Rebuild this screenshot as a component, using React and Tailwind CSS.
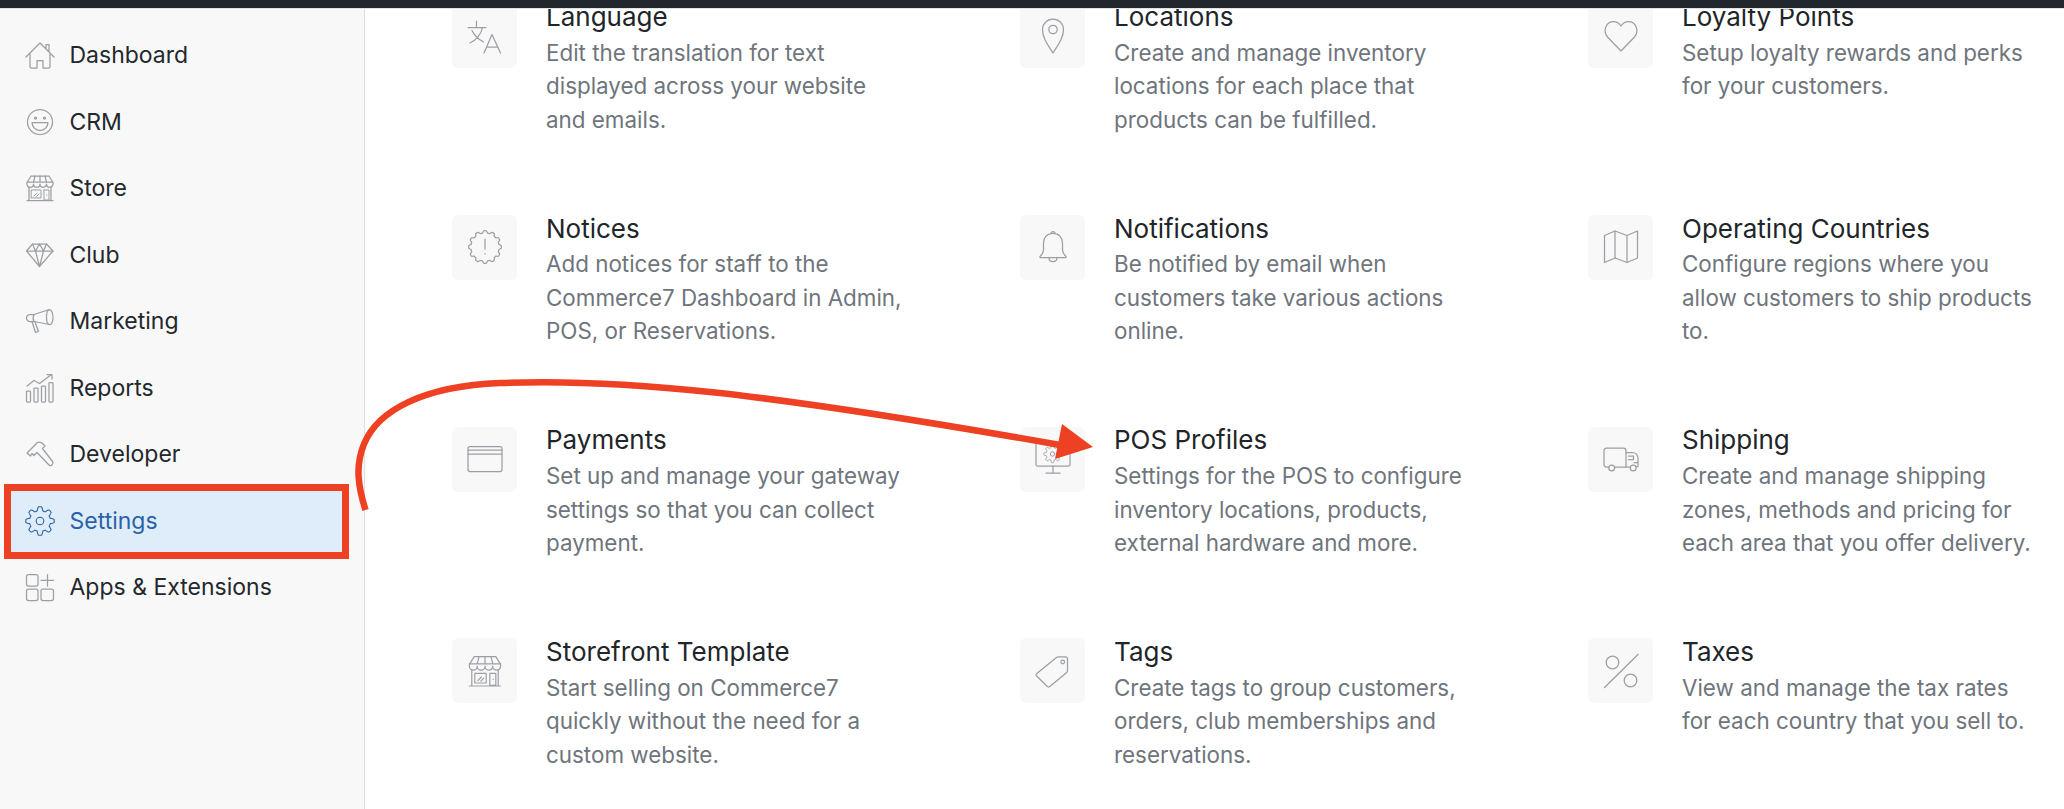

const S = ({ size = 30, box = 30, sw = 1.25, children }) => (
  <svg width={size} height={size} viewBox={`0 0 ${box} ${box}`} fill="none" stroke="currentColor" strokeWidth={sw} strokeLinecap="round" strokeLinejoin="round" className="shrink-0">
    {children}
  </svg>
);

const wavy = (cx, cy, r, amp, lobes) => {
  let d = "";
  for (let i = 0; i <= 240; i++) {
    const t = (i / 240) * Math.PI * 2;
    const k = Math.max(-1, Math.min(1, 1.7 * Math.cos(lobes * t)));
    const R = r + amp * k;
    d += `${i ? "L" : "M"}${(cx + R * Math.sin(t)).toFixed(2)} ${(cy - R * Math.cos(t)).toFixed(2)}`;
  }
  return d + "Z";
};

const StoreGlyph = () => (
  <>
    <path d="M4 14V27M26 14V27M2 27.500H28" />
    <path d="M6 3H24L28 9.500V11a3.250 3.250 0 0 1-6.500 0 3.250 3.250 0 0 1-6.500 0 3.250 3.250 0 0 1-6.500 0 3.250 3.250 0 0 1-6.500 0V9.500Z" />
    <path d="M2 9H28M8.500 9 10 3M15 9V3M21.500 9 20 3" />
    <path d="M6.500 17H16V25H6.500ZM19 17H24V27H19V17M9 23l3-3M11.500 23.500l2.500-2.500M21.800 22h.1" strokeWidth="1" />
  </>
);

const icons = {
  Dashboard: (
    <S>
      <path d="M1 17 15 3 29 17M21 9V4.500H24V12" />
      <path d="M5 14V26.500A1.500 1.500 0 0 0 6.500 28H12V20.500H18V28H23.500A1.500 1.500 0 0 0 25 26.500V14" />
    </S>
  ),
  CRM: (
    <S>
      <circle cx="15" cy="15" r="12.500" />
      <circle cx="10.500" cy="11" r="1" />
      <circle cx="19.500" cy="11" r="1" />
      <path d="M7 15.500H23A8 8 0 0 1 7 15.500Z" />
    </S>
  ),
  Store: <S><StoreGlyph /></S>,
  Club: (
    <S>
      <path d="M7.500 4H21.500L28 11 14.500 26.500 1.500 11Z" />
      <path d="M1.500 11H28M7.500 4 10.500 11 14.500 26.500 18.500 11 21.500 4M10.500 11 14.500 4 18.500 11" />
    </S>
  ),
  Marketing: (
    <S>
      <path d="M9 8.500 24.500 3.500C26.500 3.500 28 7.500 28 11.500 28 15.500 26.500 19 24.500 18.500L9 15.500H5A3.500 3.500 0 0 1 5 8.500Z" />
      <path d="M24.500 3.500C22.500 3.500 21.500 7.500 21.500 11 21.500 15 22.500 18.500 24.500 18.500M9 8.500C8 10.500 8 13.500 9 15.500M10 16 13.500 25.500 10.500 26.500 7 15.500" />
    </S>
  ),
  Reports: (
    <S>
      <rect x="1.500" y="18" width="4" height="11" rx=".8" />
      <rect x="9" y="15" width="4" height="14" rx=".8" />
      <rect x="16.500" y="13" width="4" height="16" rx=".8" />
      <rect x="24" y="9.500" width="4" height="19.500" rx=".8" />
      <path d="M2 13 9 7.500 14.500 10.500 26.500 1.500M22 1.500H27V6" />
    </S>
  ),
  Developer: (
    <S>
      <path d="M2 14 12.500 3.500C14 2.500 17 3.500 18 5L20 7 17.500 9.500 27.500 22.500C29 24.500 26 28 24 26L12 13.500 9 16.500 7 14.500 5.500 17Z" />
    </S>
  ),
  Settings: (
    <S sw={1.1}>
      <path d={wavy(15, 15, 12.300, 1.900, 8)} />
      <circle cx="15" cy="15" r="3.800" />
    </S>
  ),
  "Apps & Extensions": (
    <S>
      <rect x="1.500" y="2.500" width="11.500" height="11.500" rx="2" />
      <rect x="1.500" y="17" width="11.500" height="11.500" rx="2" />
      <rect x="16" y="17" width="12.500" height="11.500" rx="2" />
      <path d="M22.500 2.500V14M16 8.300H28.500" />
    </S>
  ),
};

const big = {
  Language: (
    <S size={36} box={36}>
      <path d="M1 9.500H19M9.500 3V9.500M15.500 9.500C14.500 16 9 22 3 25M5 12.500C7 17 11 21 16.500 24" />
      <path d="M17 35 25 16.500 33.500 35M19.500 29H31" />
    </S>
  ),
  Locations: (
    <S size={36} box={36}>
      <path d="M18 35C13 27 7.500 20 7.500 11.500A10.500 10.500 0 0 1 28.500 11.500C28.500 20 23 27 18 35Z" />
      <circle cx="18" cy="11.500" r="4.200" />
    </S>
  ),
  "Loyalty Points": (
    <S size={36} box={36}>
      <path d="M18 33 4.500 19C-.5 13 3 3.500 10.500 3.500 14 3.500 16.500 5.500 18 8 19.500 5.500 22 3.500 25.500 3.500 33 3.500 36.500 13 31.500 19Z" />
    </S>
  ),
  Notices: (
    <S size={36} box={36}>
      <path d={wavy(18, 18, 15.200, 1.100, 12)} />
      <path d="M18 10V20M18 24.500V25" />
    </S>
  ),
  Notifications: (
    <S size={36} box={36}>
      <path d="M16 4.500C16 2 20 2 20 4.500M18 4.300C12 4.300 8.500 8.500 8.500 14V21C8.500 24 6.500 26 5 27.500V28.500H31V27.500C29.500 26 27.500 24 27.500 21V14C27.500 8.500 24 4.300 18 4.300Z" />
      <path d="M14 28.500C14 34 22 34 22 28.500" />
    </S>
  ),
  "Operating Countries": (
    <S size={36} box={36}>
      <path d="M1.500 6.500 12 2 24 6.500 34.500 2V29L24 33.500 12 29 1.500 33.500Z" />
      <path d="M12 2V29M24 6.500V33.500" />
    </S>
  ),
  Payments: (
    <S size={36} box={36}>
      <rect x="1" y="5.500" width="34" height="25" rx="2" />
      <path d="M1 13H35M1 9H35" />
    </S>
  ),
  "POS Profiles": (
    <S size={36} box={36}>
      <rect x="1" y="1.500" width="34" height="23.500" rx="1.500" />
      <path d="M18 25V31.500M11 32H25" />
      <path d={wavy(17.500, 13, 7.500, 1.200, 8)} strokeWidth="1" />
      <circle cx="17.500" cy="13" r="2.200" strokeWidth="1" />
    </S>
  ),
  Shipping: (
    <S size={36} box={36}>
      <path d="M6 26H3.500A2.500 2.500 0 0 1 1 23.500V9.500A2.500 2.500 0 0 1 3.500 7H20.500A2.500 2.500 0 0 1 23 9.500V26H11.500M17 26H23" />
      <path d="M23 11.500H29.500C33 12 35 14 35 17.500V25.500H33M27.500 26H23M25.500 15H30.500V18.500H25.500M31 21.500H35" />
      <circle cx="8.700" cy="27" r="2.900" />
      <circle cx="30.200" cy="27" r="2.900" />
    </S>
  ),
  "Storefront Template": <S size={36} box={30} sw={1}><StoreGlyph /></S>,
  Tags: (
    <S size={36} box={36}>
      <path d="M1.800 20.500 21.500 4.500Q22.500 3.800 23.800 3.800H30.500A2 2 0 0 1 32.500 5.800V17.500Q32.500 18.800 31.500 19.800L14.800 33.500A2 2 0 0 1 12 33.200L1.500 22.800A1.500 1.500 0 0 1 1.800 20.500Z" />
      <circle cx="27.700" cy="9" r="1.800" />
    </S>
  ),
  Taxes: (
    <S size={36} box={36}>
      <path d="M35 1.500 1.500 34.500" />
      <circle cx="9.500" cy="9.500" r="6.300" />
      <circle cx="27.500" cy="27.500" r="6.300" />
    </S>
  ),
};

const nav = ["Dashboard", "CRM", "Store", "Club", "Marketing", "Reports", "Developer", "Settings", "Apps & Extensions"];

const cards = [
  ["Language", ["Edit the translation for text", "displayed across your website", "and emails."]],
  ["Locations", ["Create and manage inventory", "locations for each place that", "products can be fulfilled."]],
  ["Loyalty Points", ["Setup loyalty rewards and perks", "for your customers."]],
  ["Notices", ["Add notices for staff to the", "Commerce7 Dashboard in Admin,", "POS, or Reservations."]],
  ["Notifications", ["Be notified by email when", "customers take various actions", "online."]],
  ["Operating Countries", ["Configure regions where you", "allow customers to ship products", "to."]],
  ["Payments", ["Set up and manage your gateway", "settings so that you can collect", "payment."]],
  ["POS Profiles", ["Settings for the POS to configure", "inventory locations, products,", "external hardware and more."]],
  ["Shipping", ["Create and manage shipping", "zones, methods and pricing for", "each area that you offer delivery."]],
  ["Storefront Template", ["Start selling on Commerce7", "quickly without the need for a", "custom website."]],
  ["Tags", ["Create tags to group customers,", "orders, club memberships and", "reservations."]],
  ["Taxes", ["View and manage the tax rates", "for each country that you sell to."]],
];

export default function App() {
  return (
    <div className="relative flex h-[809px] w-[2064px] flex-col overflow-hidden bg-white font-['Inter',sans-serif]">
      <div className="relative z-10 h-[9px] shrink-0 border-b border-[#dfe1e3] bg-[#21272d]" />
      <div className="flex min-h-0 flex-1">
        <aside className="w-[365px] shrink-0 border-r border-[#dedede] bg-[#f8f8f8] pt-[13px]">
          {nav.map((n) => {
            const on = n === "Settings";
            return (
              <div key={n} className={`flex h-[66.500px] items-center gap-[14.500px] text-[23px] ${on ? "ml-[8px] mr-[20px] pl-[17px] bg-[#dfedfb] text-[#2a62a8]" : "pl-[25px] text-[#23282d]"}`}>
                <span className={on ? "text-[#2a62a8]" : "text-[#9b9fa4]"}>{icons[n]}</span>
                <span>{n}</span>
              </div>
            );
          })}
        </aside>
        <main className="-mt-[5.700px] grid flex-1 auto-rows-[211.670px] grid-cols-[repeat(3,568px)] pl-[87px]">
          {cards.map(([t, lines]) => (
            <div key={t} className="flex gap-[29px]">
              <div className="flex h-[65px] w-[65px] shrink-0 items-center justify-center rounded-[6px] bg-[#f8f8f8] text-[#9b9fa4]">{big[t]}</div>
              <div className="-mt-[5.200px]">
                <div className="text-[26px] leading-[37.700px] text-[#212529]">{t}</div>
                <div className="text-[22.400px] leading-[33.500px] text-[#6f757c]">
                  {lines.map((l) => <div key={l} className="whitespace-nowrap">{l}</div>)}
                </div>
              </div>
            </div>
          ))}
        </main>
      </div>
      <div className="absolute left-[4px] top-[484px] h-[75px] w-[345px] border-[7px] border-[#ee4023]" />
      <svg className="pointer-events-none absolute left-0 top-0" width="2064" height="809" viewBox="0 0 2064 809" fill="none">
        <path d="M365.500 510C358 486 355 466 364 444 378 410 424 386 500 383 620 378 760 392 1060 445" stroke="#ee4023" strokeWidth="6.500" />
        <path d="M1093 447 1062 424 1055 459Z" fill="#ee4023" />
      </svg>
    </div>
  );
}
